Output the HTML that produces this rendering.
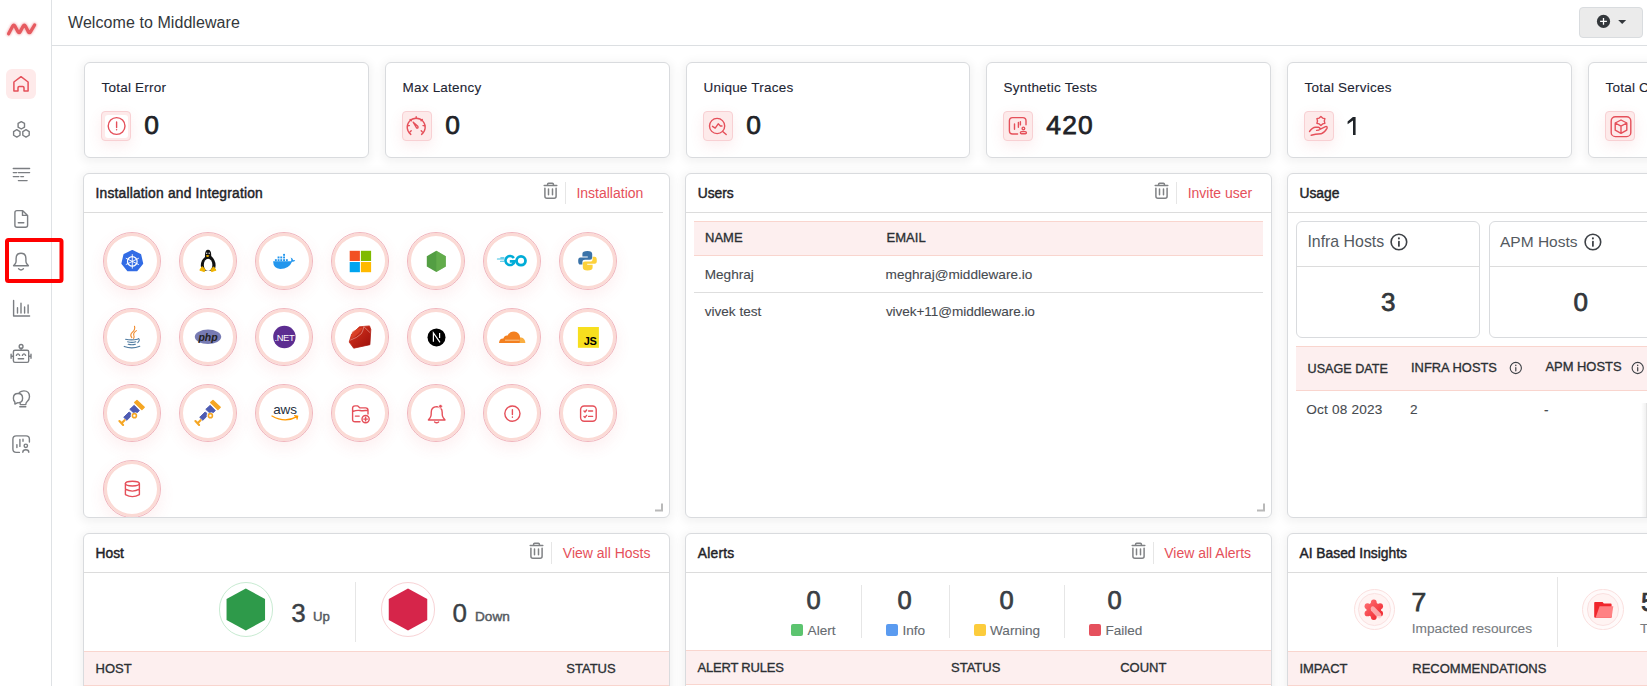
<!DOCTYPE html><html><head><meta charset="utf-8"><title>Middleware</title><style>
*{box-sizing:border-box;margin:0;padding:0}
html,body{width:1647px;height:686px;overflow:hidden;background:#fff;font-family:"Liberation Sans",sans-serif;color:#1f2328}
.t{position:absolute;white-space:nowrap;line-height:1}
.b{font-weight:700}
.card{position:absolute;top:62px;height:96px;width:285px;border:1px solid #d9dbde;border-radius:6px;background:#fff;box-shadow:0 2px 10px 3px rgba(0,0,0,.05)}
.ibox{position:absolute;width:30px;height:30px;border:1px solid #f8d0d3;border-radius:4px;background:#fdeaea;box-shadow:0 5px 14px rgba(229,80,90,.10)}
.panel{position:absolute;border:1px solid #d9dbde;border-radius:6px;background:#fff;box-shadow:0 2px 10px 3px rgba(0,0,0,.05);overflow:hidden}
.hb{position:absolute;height:1px;background:#dcdcdc}
.sep{position:absolute;width:1px;background:#e6e6e6}
.link{color:#e5505a;font-size:14px}
.ring{position:absolute;width:58px;height:58px;border-radius:50%;border:1px solid #f0b5bd;box-shadow:0 0 0 3px #fbdad5 inset,0 6px 16px rgba(229,80,90,.09);background:#fff}
.thead{position:absolute;background:#fdefef;border-top:1px solid #f9d5ce;border-bottom:1px solid #f9d5ce}
.th{font-size:13px;font-weight:700;color:#2b2f33}
.td{font-size:13.5px;color:#3d4146}
</style></head><body>
<div style="position:absolute;left:0;top:0;width:52px;height:686px;border-right:1px solid #dfe2e5;background:#fff"></div>
<div style="position:absolute;left:52px;top:0;width:1595px;height:46px;border-bottom:1px solid #dcdfe2;background:#fff"></div>
<div style="position:absolute;left:6px;top:69px;width:30px;height:30px;border-radius:6px;background:#feeaea"></div>
<div class="t" style="left:68.00px;top:15.26px;font-size:16px;color:#33373b;letter-spacing:0.07px;">Welcome to Middleware</div>
<div style="position:absolute;left:1579px;top:7px;width:64px;height:31px;border:1px solid #d9dcdf;border-radius:4px;background:#ebebeb"></div>
<div class="card" style="left:84px;width:285px"></div>
<div class="t" style="left:101.50px;top:80.87px;font-size:13.5px;color:#1d2533;-webkit-text-stroke:0.1px #1d2533;letter-spacing:0.22px;">Total Error</div>
<div class="ibox" style="left:101px;top:111px"></div>
<div class="t" style="left:144.30px;top:112.35px;font-size:26.4px;color:#1f2328;-webkit-text-stroke:0.75px #1f2328;letter-spacing:1.2px;">0</div>
<div class="card" style="left:385px;width:285px"></div>
<div class="t" style="left:402.50px;top:80.87px;font-size:13.5px;color:#1d2533;-webkit-text-stroke:0.1px #1d2533;letter-spacing:0.22px;">Max Latency</div>
<div class="ibox" style="left:402px;top:111px"></div>
<div class="t" style="left:445.30px;top:112.35px;font-size:26.4px;color:#1f2328;-webkit-text-stroke:0.75px #1f2328;letter-spacing:1.2px;">0</div>
<div class="card" style="left:686px;width:284px"></div>
<div class="t" style="left:703.50px;top:80.87px;font-size:13.5px;color:#1d2533;-webkit-text-stroke:0.1px #1d2533;letter-spacing:0.22px;">Unique Traces</div>
<div class="ibox" style="left:703px;top:111px"></div>
<div class="t" style="left:746.30px;top:112.35px;font-size:26.4px;color:#1f2328;-webkit-text-stroke:0.75px #1f2328;letter-spacing:1.2px;">0</div>
<div class="card" style="left:986px;width:285px"></div>
<div class="t" style="left:1003.50px;top:80.87px;font-size:13.5px;color:#1d2533;-webkit-text-stroke:0.1px #1d2533;letter-spacing:0.22px;">Synthetic Tests</div>
<div class="ibox" style="left:1003px;top:111px"></div>
<div class="t" style="left:1046.30px;top:112.35px;font-size:26.4px;color:#1f2328;-webkit-text-stroke:0.75px #1f2328;letter-spacing:1.2px;">420</div>
<div class="card" style="left:1287px;width:285px"></div>
<div class="t" style="left:1304.50px;top:80.87px;font-size:13.5px;color:#1d2533;-webkit-text-stroke:0.1px #1d2533;letter-spacing:0.22px;">Total Services</div>
<div class="ibox" style="left:1304px;top:111px"></div>
<div class="card" style="left:1588px;width:285px"></div>
<div class="t" style="left:1605.50px;top:80.87px;font-size:13.5px;color:#1d2533;-webkit-text-stroke:0.1px #1d2533;letter-spacing:0.22px;">Total Containers</div>
<div class="ibox" style="left:1605px;top:111px"></div>
<div style="position:absolute;left:105px;top:114.5px;width:22.5px;height:23px;border-radius:3px;background:#fff"></div>
<div class="panel" style="left:83px;top:173px;width:587px;height:345px"></div>
<div class="panel" style="left:685px;top:173px;width:587px;height:345px"></div>
<div class="panel" style="left:1287px;top:173px;width:400px;height:345px"></div>
<div class="panel" style="left:83px;top:533px;width:587px;height:200px"></div>
<div class="panel" style="left:685px;top:533px;width:587px;height:200px"></div>
<div class="panel" style="left:1287px;top:533px;width:400px;height:200px"></div>
<div class="hb" style="left:84px;top:212px;width:579px"></div>
<div class="hb" style="left:686px;top:212px;width:585px"></div>
<div class="hb" style="left:1288px;top:212px;width:359px"></div>
<div class="hb" style="left:84px;top:572px;width:585px"></div>
<div class="hb" style="left:686px;top:572px;width:585px"></div>
<div class="hb" style="left:1288px;top:572px;width:359px"></div>
<div class="t" style="left:95.50px;top:186.62px;font-size:13.8px;color:#1f2328;-webkit-text-stroke:0.45px #1f2328;letter-spacing:0.2px;">Installation and Integration</div>
<div class="t" style="left:697.70px;top:186.62px;font-size:13.8px;color:#1f2328;-webkit-text-stroke:0.45px #1f2328;">Users</div>
<div class="t" style="left:1299.50px;top:186.62px;font-size:13.8px;color:#1f2328;-webkit-text-stroke:0.45px #1f2328;">Usage</div>
<div class="t" style="left:95.50px;top:546.92px;font-size:13.8px;color:#1f2328;-webkit-text-stroke:0.45px #1f2328;">Host</div>
<div class="t" style="left:697.70px;top:546.92px;font-size:13.8px;color:#1f2328;-webkit-text-stroke:0.45px #1f2328;letter-spacing:0.25px;">Alerts</div>
<div class="t" style="left:1299.50px;top:546.92px;font-size:13.8px;color:#1f2328;-webkit-text-stroke:0.45px #1f2328;">AI Based Insights</div>
<div class="sep" style="left:565px;top:182px;height:22px"></div>
<div class="t" style="left:576.40px;top:186.25px;font-size:14px;color:#e5505a;">Installation</div>
<div class="sep" style="left:1176px;top:182px;height:22px"></div>
<div class="t" style="left:1187.70px;top:186.35px;font-size:14px;color:#e5505a;">Invite user</div>
<div class="sep" style="left:551px;top:542px;height:22px"></div>
<div class="t" style="left:562.80px;top:546.25px;font-size:14px;color:#e5505a;">View all Hosts</div>
<div class="sep" style="left:1153px;top:542px;height:22px"></div>
<div class="t" style="left:1164.20px;top:545.85px;font-size:14px;color:#e5505a;">View all Alerts</div>
<div style="position:absolute;left:84px;top:213px;width:584px;height:304px;overflow:hidden">
<div class="ring" style="left:19px;top:18.69999999999999px"></div>
<div class="ring" style="left:95px;top:18.69999999999999px"></div>
<div class="ring" style="left:171px;top:18.69999999999999px"></div>
<div class="ring" style="left:247px;top:18.69999999999999px"></div>
<div class="ring" style="left:323px;top:18.69999999999999px"></div>
<div class="ring" style="left:399px;top:18.69999999999999px"></div>
<div class="ring" style="left:475px;top:18.69999999999999px"></div>
<div class="ring" style="left:19px;top:94.60000000000002px"></div>
<div class="ring" style="left:95px;top:94.60000000000002px"></div>
<div class="ring" style="left:171px;top:94.60000000000002px"></div>
<div class="ring" style="left:247px;top:94.60000000000002px"></div>
<div class="ring" style="left:323px;top:94.60000000000002px"></div>
<div class="ring" style="left:399px;top:94.60000000000002px"></div>
<div class="ring" style="left:475px;top:94.60000000000002px"></div>
<div class="ring" style="left:19px;top:170.60000000000002px"></div>
<div class="ring" style="left:95px;top:170.60000000000002px"></div>
<div class="ring" style="left:171px;top:170.60000000000002px"></div>
<div class="ring" style="left:247px;top:170.60000000000002px"></div>
<div class="ring" style="left:323px;top:170.60000000000002px"></div>
<div class="ring" style="left:399px;top:170.60000000000002px"></div>
<div class="ring" style="left:475px;top:170.60000000000002px"></div>
<div class="ring" style="left:19px;top:246.5px"></div>
</div>
<div style="position:absolute;left:84px;top:517px;width:585px;height:16px;background:transparent"></div>
<div class="thead" style="left:694px;top:221px;width:569px;height:35px"></div>
<div class="t" style="left:705.00px;top:231.30px;font-size:13px;color:#2b2f33;-webkit-text-stroke:0.32px #2b2f33;">NAME</div>
<div class="t" style="left:886.60px;top:231.30px;font-size:13px;color:#2b2f33;-webkit-text-stroke:0.32px #2b2f33;">EMAIL</div>
<div class="t" style="left:704.70px;top:268.29px;font-size:13.6px;color:#464a4f;-webkit-text-stroke:0.1px #464a4f;">Meghraj</div>
<div class="t" style="left:885.60px;top:268.29px;font-size:13.6px;color:#464a4f;-webkit-text-stroke:0.1px #464a4f;">meghraj@middleware.io</div>
<div class="hb" style="left:694px;top:292px;width:569px;background:#dedede"></div>
<div class="t" style="left:704.70px;top:304.79px;font-size:13.6px;color:#464a4f;-webkit-text-stroke:0.1px #464a4f;">vivek test</div>
<div class="t" style="left:885.90px;top:304.79px;font-size:13.6px;color:#464a4f;-webkit-text-stroke:0.1px #464a4f;letter-spacing:-0.08px;">vivek+11@middleware.io</div>
<div style="position:absolute;left:1296px;top:221px;width:184px;height:117px;border:1px solid #d9dbde;border-radius:6px;background:#fff"></div>
<div class="hb" style="left:1297px;top:266px;width:182px"></div>
<div style="position:absolute;left:1489px;top:221px;width:184px;height:117px;border:1px solid #d9dbde;border-radius:6px;background:#fff"></div>
<div class="hb" style="left:1490px;top:266px;width:182px"></div>
<div class="t" style="left:1307.40px;top:234.14px;font-size:15.9px;color:#555a5f;">Infra Hosts</div>
<div class="t" style="left:1500.00px;top:234.48px;font-size:15.5px;color:#555a5f;">APM Hosts</div>
<div class="t" style="left:1381.00px;top:289.29px;font-size:26px;color:#33373b;-webkit-text-stroke:0.75px #33373b;">3</div>
<div class="t" style="left:1573.50px;top:289.29px;font-size:26px;color:#33373b;-webkit-text-stroke:0.75px #33373b;">0</div>
<div class="thead" style="left:1296px;top:346px;width:400px;height:45px"></div>
<div class="t" style="left:1307.60px;top:363.13px;font-size:12.6px;color:#2b2f33;-webkit-text-stroke:0.32px #2b2f33;">USAGE DATE</div>
<div class="t" style="left:1411.00px;top:361.88px;font-size:12.9px;color:#2b2f33;-webkit-text-stroke:0.32px #2b2f33;">INFRA HOSTS</div>
<div class="t" style="left:1545.40px;top:361.24px;font-size:12.95px;color:#2b2f33;-webkit-text-stroke:0.32px #2b2f33;">APM HOSTS</div>
<div class="t" style="left:1306.30px;top:402.79px;font-size:13.6px;color:#464a4f;-webkit-text-stroke:0.1px #464a4f;letter-spacing:0.2px;">Oct 08 2023</div>
<div class="t" style="left:1410.00px;top:402.79px;font-size:13.6px;color:#464a4f;-webkit-text-stroke:0.1px #464a4f;">2</div>
<div class="t" style="left:1544.00px;top:402.79px;font-size:13.6px;color:#464a4f;-webkit-text-stroke:0.1px #464a4f;">-</div>
<div style="position:absolute;left:1641px;top:403px;width:5px;height:114px;background:linear-gradient(to right,rgba(0,0,0,0),rgba(0,0,0,.06))"></div>
<div style="position:absolute;left:1646px;top:403px;width:1px;height:114px;background:#e2e2e2"></div>
<div style="position:absolute;left:218.5px;top:582px;width:54.5px;height:54.5px;border-radius:50%;border:1px solid #c8ebd2"></div>
<div style="position:absolute;left:380.7px;top:582px;width:54.5px;height:54.5px;border-radius:50%;border:1px solid #f8d3d6"></div>
<div class="t" style="left:291.30px;top:599.79px;font-size:26px;color:#3a3f45;-webkit-text-stroke:0.4px #3a3f45;letter-spacing:0.3px;">3</div>
<div class="t" style="left:313.00px;top:610.13px;font-size:13.2px;color:#555a5f;-webkit-text-stroke:0.45px #555a5f;">Up</div>
<div class="t" style="left:452.60px;top:599.79px;font-size:26px;color:#3a3f45;-webkit-text-stroke:0.4px #3a3f45;letter-spacing:0.3px;">0</div>
<div class="t" style="left:475.00px;top:609.79px;font-size:13.6px;color:#555a5f;-webkit-text-stroke:0.45px #555a5f;">Down</div>
<div class="sep" style="left:355px;top:582px;height:60px"></div>
<div class="thead" style="left:84px;top:651px;width:585px;height:35px"></div>
<div class="t" style="left:95.50px;top:661.70px;font-size:13px;color:#2b2f33;-webkit-text-stroke:0.32px #2b2f33;">HOST</div>
<div class="t" style="left:566.30px;top:661.70px;font-size:13px;color:#2b2f33;-webkit-text-stroke:0.32px #2b2f33;">STATUS</div>
<div class="t" style="left:806.40px;top:587.71px;font-size:25.5px;color:#3a3f45;-webkit-text-stroke:0.75px #3a3f45;">0</div>
<div style="position:absolute;left:791px;top:624.3px;width:12px;height:11.5px;border-radius:2px;background:#5cc46f"></div>
<div class="t" style="left:807.60px;top:623.99px;font-size:13.6px;color:#666b70;-webkit-text-stroke:0.1px #666b70;">Alert</div>
<div class="t" style="left:897.50px;top:587.71px;font-size:25.5px;color:#3a3f45;-webkit-text-stroke:0.75px #3a3f45;">0</div>
<div style="position:absolute;left:886px;top:624.3px;width:12px;height:11.5px;border-radius:2px;background:#5a9bf0"></div>
<div class="t" style="left:902.40px;top:623.99px;font-size:13.6px;color:#666b70;-webkit-text-stroke:0.1px #666b70;">Info</div>
<div class="t" style="left:999.50px;top:587.71px;font-size:25.5px;color:#3a3f45;-webkit-text-stroke:0.75px #3a3f45;">0</div>
<div style="position:absolute;left:974px;top:624.3px;width:12px;height:11.5px;border-radius:2px;background:#fccc3c"></div>
<div class="t" style="left:990.00px;top:623.99px;font-size:13.6px;color:#666b70;-webkit-text-stroke:0.1px #666b70;">Warning</div>
<div class="t" style="left:1107.60px;top:587.71px;font-size:25.5px;color:#3a3f45;-webkit-text-stroke:0.75px #3a3f45;">0</div>
<div style="position:absolute;left:1089px;top:624.3px;width:12px;height:11.5px;border-radius:2px;background:#e5505d"></div>
<div class="t" style="left:1105.40px;top:623.99px;font-size:13.6px;color:#666b70;-webkit-text-stroke:0.1px #666b70;">Failed</div>
<div class="sep" style="left:861px;top:585px;height:53px"></div>
<div class="sep" style="left:949px;top:585px;height:53px"></div>
<div class="sep" style="left:1064px;top:585px;height:53px"></div>
<div class="thead" style="left:686px;top:650px;width:585px;height:35px"></div>
<div class="t" style="left:697.50px;top:661.20px;font-size:13px;color:#2b2f33;-webkit-text-stroke:0.32px #2b2f33;letter-spacing:-0.2px;">ALERT RULES</div>
<div class="t" style="left:951.00px;top:661.20px;font-size:13px;color:#2b2f33;-webkit-text-stroke:0.32px #2b2f33;">STATUS</div>
<div class="t" style="left:1120.20px;top:661.20px;font-size:13px;color:#2b2f33;-webkit-text-stroke:0.32px #2b2f33;">COUNT</div>
<div style="position:absolute;left:1353.6000000000001px;top:589.2px;width:41.2px;height:41.2px;border-radius:50%;border:1px solid #fbe0df;background:#fffafa"></div>
<div style="position:absolute;left:1357.8px;top:593.4px;width:32.8px;height:32.8px;border-radius:50%;border:1px solid #fae1e1;background:#fff3f2"></div>
<div style="position:absolute;left:1582.4px;top:589.2px;width:41.2px;height:41.2px;border-radius:50%;border:1px solid #fbe0df;background:#fffafa"></div>
<div style="position:absolute;left:1586.6px;top:593.4px;width:32.8px;height:32.8px;border-radius:50%;border:1px solid #fae1e1;background:#fff3f2"></div>
<div class="t" style="left:1411.50px;top:589.47px;font-size:26.5px;color:#33373b;-webkit-text-stroke:0.75px #33373b;letter-spacing:0.5px;">7</div>
<div class="t" style="left:1411.80px;top:621.90px;font-size:13.7px;color:#777b80;-webkit-text-stroke:0.1px #777b80;">Impacted resources</div>
<div class="t" style="left:1641.00px;top:589.47px;font-size:26.5px;color:#33373b;-webkit-text-stroke:0.75px #33373b;">5</div>
<div class="t" style="left:1640.00px;top:621.90px;font-size:13.7px;color:#777b80;-webkit-text-stroke:0.1px #777b80;">T</div>
<div class="sep" style="left:1557px;top:577px;height:70px"></div>
<div class="thead" style="left:1288px;top:651px;width:400px;height:35px"></div>
<div class="t" style="left:1299.40px;top:661.70px;font-size:13px;color:#2b2f33;-webkit-text-stroke:0.32px #2b2f33;">IMPACT</div>
<div class="t" style="left:1412.30px;top:661.70px;font-size:13px;color:#2b2f33;-webkit-text-stroke:0.32px #2b2f33;">RECOMMENDATIONS</div>
<svg style="position:absolute;left:0;top:0;pointer-events:none" width="1647" height="686" viewBox="0 0 1647 686"><rect x="7" y="240" width="54.5" height="41" rx="1.5" fill="none" stroke="#ff0000" stroke-width="4"/><defs><filter id="blur1" x="-20%" y="-50%" width="140%" height="200%"><feGaussianBlur stdDeviation="0.9"/></filter></defs><path d="M8.6,33.8 L12.6,26.2 Q13.8,24 15,26.2 L17.8,31.6 Q19,33.8 20.2,31.6 L23.1,26.2 Q24.3,24 25.5,26.2 L28.2,31.6 Q29.4,33.8 30.6,31.6 L34.6,25" fill="none" stroke="#f4a9ad" stroke-width="4.6" stroke-linecap="round" stroke-linejoin="round" filter="url(#blur1)" opacity=".8"/><path d="M8.6,33.8 L12.6,26.2 Q13.8,24 15,26.2 L17.8,31.6 Q19,33.8 20.2,31.6 L23.1,26.2 Q24.3,24 25.5,26.2 L28.2,31.6 Q29.4,33.8 30.6,31.6 L34.6,25" fill="none" stroke="#e65b60" stroke-width="3.3" stroke-linecap="round" stroke-linejoin="round"/><path d="M13.9,91 V82 L21,76.7 L28.1,82 V91 H24 V87.8 Q24,86.6 22.8,86.6 H19.2 Q18,86.6 18,87.8 V91 Z" fill="none" stroke="#e5505a" stroke-width="1.5" stroke-linejoin="round"/><path d="M21.30,121.60 L24.50,123.45 L24.50,127.15 L21.30,129.00 L18.10,127.15 L18.10,123.45 Z" fill="none" stroke="#7b7e82" stroke-width="1.4" stroke-linecap="round" stroke-linejoin="round"/><path d="M16.80,129.70 L20.00,131.55 L20.00,135.25 L16.80,137.10 L13.60,135.25 L13.60,131.55 Z" fill="none" stroke="#7b7e82" stroke-width="1.4" stroke-linecap="round" stroke-linejoin="round"/><path d="M26.00,129.70 L29.20,131.55 L29.20,135.25 L26.00,137.10 L22.80,135.25 L22.80,131.55 Z" fill="none" stroke="#7b7e82" stroke-width="1.4" stroke-linecap="round" stroke-linejoin="round"/><path d="M13.3,168.5 H29.6 M13.3,172.6 H16.7 M18.4,172.6 H29.6 M13.3,176.6 H18.8 M20.8,176.6 H23.5 M18.4,180.6 H27.1" fill="none" stroke="#7b7e82" stroke-width="1.4" stroke-linecap="round" stroke-linejoin="round"/><path d="M22.5,210.6 H17 Q14.9,210.6 14.9,212.7 V225.3 Q14.9,227.3 17,227.3 H25.5 Q27.6,227.3 27.6,225.3 V215.4 Z M22.5,210.6 V215.4 H27.6 M18.3,222.7 H23.8" fill="none" stroke="#7b7e82" stroke-width="1.4" stroke-linecap="round" stroke-linejoin="round"/><path d="M13.6,265.8 H28.4 L26.6,263.5 Q25.9,262.5 25.9,261 V258.5 Q25.9,253.3 21,253.3 Q16.1,253.3 16.1,258.5 V261 Q16.1,262.5 15.4,263.5 Z M18.6,268.8 Q21,271 23.4,268.8" fill="none" stroke="#7b7e82" stroke-width="1.4" stroke-linecap="round" stroke-linejoin="round"/><path d="M13.6,300.5 V316 H29.6 M17.5,307.8 V313 M21,303.3 V313 M24.6,307 V313 M28.1,305 V313" fill="none" stroke="#7b7e82" stroke-width="1.4" stroke-linecap="round" stroke-linejoin="round"/><rect x="13.4" y="350.2" width="15.3" height="12.2" rx="1.6" fill="none" stroke="#7b7e82" stroke-width="1.4" stroke-linecap="round" stroke-linejoin="round"/><circle cx="21.1" cy="346.4" r="1.9" fill="none" stroke="#7b7e82" stroke-width="1.4" stroke-linecap="round" stroke-linejoin="round"/><path d="M21.1,348.3 V350.2 M13.4,356.3 H11.3 M11.1,354.3 V358.3 M28.7,356.3 H30.8 M31,354.3 V358.3 M16.4,355.3 Q18,352.4 19.6,355.3 M22.4,355.3 Q24,352.4 25.6,355.3 M18.2,358.8 H23.6" fill="none" stroke="#7b7e82" stroke-width="1.4" stroke-linecap="round" stroke-linejoin="round"/><path d="M19.3,392.6 Q21.2,390.9 23.9,390.9 Q29.5,390.9 29.5,396.8 Q29.5,399.6 27,401.8 Q25.8,402.9 25.8,404.6 H20.3 Q20.3,403.5 20,402.8" fill="none" stroke="#7b7e82" stroke-width="1.4" stroke-linecap="round" stroke-linejoin="round"/><path d="M22.6,398.2 Q22.6,393.5 18,393.5 Q13.4,393.5 13.4,398.2 Q13.4,400.6 14.8,401.8 L14.9,404 L17.4,402.8 Q22.6,403.2 22.6,398.2 Z M19.8,406.8 H25.8" fill="none" stroke="#7b7e82" stroke-width="1.4" stroke-linecap="round" stroke-linejoin="round"/><path d="M29.4,442 V439.2 Q29.4,435.9 26.1,435.9 H16.2 Q12.9,435.9 12.9,439.2 V449.1 Q12.9,452.4 16.2,452.4 H19.4 M16.9,444.6 V447.6 M19.9,439.4 V446.4 M23,439.3 V441.3 M22.8,452.3 Q22.8,449.7 25.8,449.7 Q28.8,449.7 28.8,452.3" fill="none" stroke="#7b7e82" stroke-width="1.4" stroke-linecap="round" stroke-linejoin="round"/><circle cx="25.8" cy="445.8" r="1.7" fill="none" stroke="#7b7e82" stroke-width="1.4" stroke-linecap="round" stroke-linejoin="round"/><circle cx="1603.5" cy="21.4" r="6.6" fill="#33373b"/><path d="M1603.5,18 V24.8 M1600.1,21.4 H1606.9" stroke="#fff" stroke-width="1.3"/><path d="M1618.2,20.1 H1626.2 L1622.2,24 Z" fill="#33373b"/><path d="M1347.6,121.4 L1352.9,117.1 H1355.6 V135.1 H1353.0 V120.6 L1347.6,124.2 Z" fill="#1f2328"/><path d="M544.2,185.4 H556.8 M547.6,185.4 V184.2 Q547.6,183.2 548.6,183.2 H552.4 Q553.4,183.2 553.4,184.2 V185.4 M544.9,188.3 V196.2 Q544.9,198.2 546.9,198.2 H554.1 Q556.1,198.2 556.1,196.2 V188.3 M548.5,189.1 V194.7 M552.5,189.1 V194.7" fill="none" stroke="#808285" stroke-width="1.5" stroke-linecap="round" stroke-linejoin="round"/><path d="M1155.2,185.4 H1167.8 M1158.6,185.4 V184.2 Q1158.6,183.2 1159.6,183.2 H1163.4 Q1164.4,183.2 1164.4,184.2 V185.4 M1155.9,188.3 V196.2 Q1155.9,198.2 1157.9,198.2 H1165.1 Q1167.1,198.2 1167.1,196.2 V188.3 M1159.5,189.1 V194.7 M1163.5,189.1 V194.7" fill="none" stroke="#808285" stroke-width="1.5" stroke-linecap="round" stroke-linejoin="round"/><path d="M530.2,545.4 H542.8 M533.6,545.4 V544.2 Q533.6,543.2 534.6,543.2 H538.4 Q539.4,543.2 539.4,544.2 V545.4 M530.9,548.3 V556.2 Q530.9,558.2 532.9,558.2 H540.1 Q542.1,558.2 542.1,556.2 V548.3 M534.5,549.1 V554.7 M538.5,549.1 V554.7" fill="none" stroke="#808285" stroke-width="1.5" stroke-linecap="round" stroke-linejoin="round"/><path d="M1132.2,545.4 H1144.8 M1135.6,545.4 V544.2 Q1135.6,543.2 1136.6,543.2 H1140.4 Q1141.4,543.2 1141.4,544.2 V545.4 M1132.9,548.3 V556.2 Q1132.9,558.2 1134.9,558.2 H1142.1 Q1144.1,558.2 1144.1,556.2 V548.3 M1136.5,549.1 V554.7 M1140.5,549.1 V554.7" fill="none" stroke="#808285" stroke-width="1.5" stroke-linecap="round" stroke-linejoin="round"/><circle cx="116.6" cy="126" r="8.4" fill="none" stroke="#e5505a" stroke-width="1.4" stroke-linecap="round" stroke-linejoin="round" stroke-width="1.3"/><path d="M116.6,121.9 V127.6 M116.6,129.6 V129.8" fill="none" stroke="#e5505a" stroke-width="1.4" stroke-linecap="round" stroke-linejoin="round"/><path d="M410.8,134.4 A9,9 0 1 1 421.6,134.4" fill="none" stroke="#e5505a" stroke-width="1.4" stroke-linecap="round" stroke-linejoin="round"/><path d="M416.2,116.8 V118.6 M407.6,125.6 H409.4 M423,125.6 H424.8 M410.1,119.5 L411.3,120.7 M422.3,119.5 L421.1,120.7 M410.2,131.8 L411.2,130.8 M422.2,131.8 L421.2,130.8" fill="none" stroke="#e5505a" stroke-width="1.4" stroke-linecap="round" stroke-linejoin="round"/><path d="M413.2,122.2 L417.8,126.2 Q418.6,128.4 416.6,128 Z" fill="none" stroke="#e5505a" stroke-width="1.4" stroke-linecap="round" stroke-linejoin="round" stroke-width="1.3"/><circle cx="717.1" cy="126" r="7.6" fill="none" stroke="#e5505a" stroke-width="1.4" stroke-linecap="round" stroke-linejoin="round"/><path d="M722.7,131.4 L726.2,134.6 M712.5,126.3 L715.2,128.1 L718.2,123.8 L720.4,126.0 H722" fill="none" stroke="#e5505a" stroke-width="1.4" stroke-linecap="round" stroke-linejoin="round"/><path d="M1026,124.7 V120.8 Q1026,117.6 1022.8,117.6 H1012.6 Q1009.4,117.6 1009.4,120.8 V130.8 Q1009.4,134 1012.6,134 H1017.6 M1014.5,124 V129.3 M1018.4,122.5 V127.3 M1020.4,121.8 V124.9" fill="none" stroke="#e5505a" stroke-width="1.4" stroke-linecap="round" stroke-linejoin="round"/><circle cx="1023.4" cy="128.4" r="1.3" fill="none" stroke="#e5505a" stroke-width="1.4" stroke-linecap="round" stroke-linejoin="round" stroke-width="1.2"/><rect x="1020.4" y="131.6" width="6" height="2.2" rx="1.1" fill="none" stroke="#e5505a" stroke-width="1.4" stroke-linecap="round" stroke-linejoin="round" stroke-width="1.2"/><path d="M1320.90,116.40 L1322.60,118.06 L1324.88,118.70 L1324.30,121.00 L1324.88,123.30 L1322.60,123.94 L1320.90,125.60 L1319.20,123.94 L1316.92,123.30 L1317.50,121.00 L1316.92,118.70 L1319.20,118.06 Z" fill="none" stroke="#e5505a" stroke-width="1.4" stroke-linecap="round" stroke-linejoin="round" stroke-width="1.2"/><path d="M1309.5,131.5 Q1312.5,127.2 1315.5,127.2 H1318.5 Q1320.3,127.6 1319.8,129.3 Q1319.3,130.4 1316.6,130.4 M1319.8,129.3 L1325.5,126.6 Q1327.6,126.2 1327,128.3 Q1324.4,132.8 1321,133.8 Q1315,134.2 1311.2,135.2" fill="none" stroke="#e5505a" stroke-width="1.4" stroke-linecap="round" stroke-linejoin="round" stroke-width="1.3"/><rect x="1611.2" y="116.8" width="19.6" height="19.8" rx="4.2" fill="none" stroke="#e5505a" stroke-width="1.4" stroke-linecap="round" stroke-linejoin="round"/><path d="M1621,120 L1626.8,123 V130.2 L1621,133.4 L1615.2,130.2 V123 Z M1615.2,123 L1621,126.2 L1626.8,123 M1621,126.2 V133.4" fill="none" stroke="#e5505a" stroke-width="1.4" stroke-linecap="round" stroke-linejoin="round" stroke-width="1.3"/><circle cx="1398.9" cy="242" r="7.8" fill="none" stroke="#3d4146" stroke-width="1.6"/><path d="M1398.9,238.1 V238.49" stroke="#3d4146" stroke-width="1.92" stroke-linecap="round"/><path d="M1398.9,241.61 V245.9" stroke="#3d4146" stroke-width="1.7600000000000002" stroke-linecap="round"/><circle cx="1592.9" cy="242" r="7.8" fill="none" stroke="#3d4146" stroke-width="1.6"/><path d="M1592.9,238.1 V238.49" stroke="#3d4146" stroke-width="1.92" stroke-linecap="round"/><path d="M1592.9,241.61 V245.9" stroke="#3d4146" stroke-width="1.7600000000000002" stroke-linecap="round"/><circle cx="1515.8" cy="368" r="5.6" fill="none" stroke="#3d4146" stroke-width="1.1"/><path d="M1515.8,365.2 V365.48" stroke="#3d4146" stroke-width="1.32" stroke-linecap="round"/><path d="M1515.8,367.72 V370.8" stroke="#3d4146" stroke-width="1.2100000000000002" stroke-linecap="round"/><circle cx="1637.7" cy="368" r="5.6" fill="none" stroke="#3d4146" stroke-width="1.1"/><path d="M1637.7,365.2 V365.48" stroke="#3d4146" stroke-width="1.32" stroke-linecap="round"/><path d="M1637.7,367.72 V370.8" stroke="#3d4146" stroke-width="1.2100000000000002" stroke-linecap="round"/><path d="M245.80,588.50 L265.05,599.00 L265.05,620.00 L245.80,630.50 L226.55,620.00 L226.55,599.00 Z" fill="#2e9a4a"/><path d="M408.00,588.50 L427.25,599.00 L427.25,620.00 L408.00,630.50 L388.75,620.00 L388.75,599.00 Z" fill="#d6254a"/><path d="M662,503.5 V510.5 H655" fill="none" stroke="#b9b9b9" stroke-width="2"/><path d="M1264,503.5 V510.5 H1257" fill="none" stroke="#b9b9b9" stroke-width="2"/><path d="M132.30,250.80 L140.43,254.72 L142.44,263.51 L136.81,270.57 L127.79,270.57 L122.16,263.51 L124.17,254.72 Z" fill="#326ce5" stroke="#326ce5" stroke-width="1.5" stroke-linejoin="round"/><circle cx="132.3" cy="261.4" r="4.8" fill="none" stroke="#fff" stroke-width="1.2"/><path d="M132.3,254.2 V268.6 M125.8,258.2 L138.8,264.6 M125.8,264.6 L138.8,258.2" stroke="#fff" stroke-width="0.9"/><path d="M205,257 Q204.6,249.8 208,249.8 Q211.4,249.8 211.2,256 Q215.6,260 215.6,265.4 Q215.6,270.2 211,270.8 H205 Q200.8,270.2 200.8,265.4 Q201,260 205,257 Z" fill="#111"/><ellipse cx="208.1" cy="264.9" rx="4.3" ry="6.1" fill="#fff"/><circle cx="206.7" cy="253.3" r="0.75" fill="#ddd"/><circle cx="209.2" cy="253.3" r="0.75" fill="#ddd"/><path d="M205.8,255.7 Q207.6,254.3 209.4,255.7 Q207.6,258.2 205.8,255.7 Z" fill="#f0b400"/><path d="M199.8,270.2 L202.2,266.6 L205.2,269.6 L204.4,271.6 Z M216,270.2 L213.6,266.8 L210.8,269.8 L211.6,271.6 Z" fill="#f0b400" stroke="#f0b400" stroke-width="1" stroke-linejoin="round"/><path d="M273.1,261.3 H291.2 Q291.6,258.6 290.6,257.4 Q292.8,258 293.2,260.2 Q294.4,259.6 295.2,260.4 Q294.2,262 292,261.8 Q289.2,268.9 280.2,268.9 Q273.4,268.8 273.1,261.3 Z" fill="#2396ed"/><rect x="274.9" y="259.2" width="1.9" height="1.9" fill="#2396ed"/><rect x="277.6" y="259.2" width="1.9" height="1.9" fill="#2396ed"/><rect x="280.3" y="259.2" width="1.9" height="1.9" fill="#2396ed"/><rect x="283.1" y="259.2" width="1.9" height="1.9" fill="#2396ed"/><rect x="285.9" y="259.2" width="1.9" height="1.9" fill="#2396ed"/><rect x="277.6" y="256.5" width="1.9" height="1.9" fill="#2396ed"/><rect x="280.3" y="256.5" width="1.9" height="1.9" fill="#2396ed"/><rect x="283.1" y="256.5" width="1.9" height="1.9" fill="#2396ed"/><rect x="283.1" y="253.9" width="1.9" height="1.9" fill="#2396ed"/><rect x="349.7" y="250.8" width="10.2" height="10.2" fill="#f25022"/><rect x="360.9" y="250.8" width="10.2" height="10.2" fill="#7fba00"/><rect x="349.7" y="262" width="10.2" height="10.2" fill="#00a4ef"/><rect x="360.9" y="262" width="10.2" height="10.2" fill="#ffb900"/><path d="M436.3,250.8 L445.8,256.2 V266.6 L436.3,272 L426.8,266.6 V256.2 Z" fill="#539e43"/><path d="M436.3,250.8 L445.8,256.2 V266.6 L436.3,272 Z" fill="#6cb552" opacity=".6"/><ellipse cx="521" cy="260.8" rx="4.5" ry="4.4" stroke="#00acd7" stroke-width="2.8" fill="none"/><path d="M513.9,258 A4.6,4.5 0 1 0 514.6,261.4 H509.8" stroke="#00acd7" stroke-width="2.6" fill="none"/><path d="M497.4,259 H503.6 M500.8,257.8 H504 M500.5,261.2 H504" stroke="#3cc0e2" stroke-width="1.1" stroke-linecap="round"/><path d="M587.5,251 Q582.2,251 582.4,254 V256.6 H587.8 V257.6 H580.4 Q578,257.6 578.2,261.2 Q578.2,264.6 580.4,264.6 H582.4 V262.2 Q582.4,259.8 585,259.8 H590 Q592.2,259.8 592.2,257.6 V254 Q592.2,251 587.5,251 Z" fill="#3a73a9"/><path d="M587.4,270.4 Q592.8,270.4 592.6,267.4 V264.8 H587.2 V263.8 H594.6 Q597,263.8 596.8,260.2 Q596.8,256.8 594.6,256.8 H592.6 V259.2 Q592.6,261.6 590,261.6 H585 Q582.8,261.6 582.8,263.8 V267.4 Q582.8,270.4 587.4,270.4 Z" fill="#fdd13a"/><path d="M134.5,326.2 Q135.6,329.4 132.2,332.4 Q129.6,335 131.8,337.6 M136.4,330.6 Q133,332.6 133.8,335.2 Q134.6,337 133.6,338.4" fill="none" stroke="#f08a2c" stroke-width="1.1" stroke-linecap="round"/><path d="M125.6,339.3 Q131.5,340.5 137.6,339.2 M138.2,338.6 Q140.6,339.6 137.8,342.6 M127.6,341.8 Q132,342.9 135.8,341.8 M128.2,344.3 Q132,345.3 135.4,344.3 M124.2,346.4 Q132,349.4 139.8,346.2" fill="none" stroke="#4f7ba0" stroke-width="1.05" stroke-linecap="round"/><ellipse cx="208" cy="336.8" rx="13.2" ry="7.2" fill="#777bb3"/><text x="208" y="340.6" text-anchor="middle" font-family="Liberation Sans" font-style="italic" font-weight="700" font-size="10.5" fill="#222">php</text><circle cx="284.4" cy="337" r="11.2" fill="#5c2d91"/><text x="284.4" y="340.6" text-anchor="middle" font-family="Liberation Sans" font-size="9.4" fill="#fff" letter-spacing="-0.4">.NET</text><defs><linearGradient id="rb" gradientUnits="userSpaceOnUse" x1="350" y1="326" x2="371" y2="348"><stop offset="0" stop-color="#d8361f"/><stop offset="1" stop-color="#9c0f0a"/></linearGradient></defs><path d="M349.2,342.1 L351.6,334.2 L359.4,326.8 L369.5,325.9 L370.8,329.4 L369.9,344.7 L353.7,348.2 Z" fill="url(#rb)" stroke="url(#rb)" stroke-width="0.8" stroke-linejoin="round"/><path d="M350.2,340.2 Q357,338 361.4,333.6 Q363.4,330 363.8,326.6 L369.9,332.5" fill="none" stroke="#f6c9c0" stroke-width="0.6" opacity=".85"/><path d="M352,332 Q356,328.4 362.6,327.4 Q361,332.6 350.8,339.6 Z" fill="#e04a2e" opacity=".7"/><circle cx="436.5" cy="337.4" r="9" fill="#000"/><path d="M433.4,341.8 V333 L440,342.4 M439.6,333 V338" fill="none" stroke="#fff" stroke-width="1.2"/><path d="M516.5,342.9 Q517.4,337 521.2,337.6 Q525,338.2 525.4,342.9 Z" fill="#faae40"/><path d="M499,342.9 Q499.4,338.4 503.4,338.6 Q504.4,335.2 507.6,335.6 Q509.6,331.4 514,331.4 Q519.4,331.6 520.2,337.6 L519.6,342.9 Z" fill="#f38020"/><path d="M505,340.2 H519.6" stroke="#fdd6a8" stroke-width="0.8"/><rect x="577.9" y="327" width="21" height="20.8" fill="#f7df1e"/><text x="596.6" y="345.4" text-anchor="end" font-family="Liberation Sans" font-weight="700" font-size="11" fill="#000" letter-spacing="-0.3">JS</text><g transform="translate(116,397)"><path d="M18.66,5.6 L20.99,3.5 L28.22,10.26 L25.89,12.59 Z" fill="#f5a623" stroke="#f5a623" stroke-width="1.3" stroke-linejoin="round"/><path d="M13.76,12.36 L18.19,8.3 L23.32,13.53 L21.55,15.49 Q19.6,14.4 17.2,15.4 Z" fill="#4e5bb2" stroke="#4e5bb2" stroke-width="0.9" stroke-linejoin="round"/><path d="M7.7,20.3 L13.06,15.02 L14.83,16.23 Q13.8,17.9 14.23,19.96 L10.82,23.32 Z" fill="#4e5bb2" stroke="#4e5bb2" stroke-width="0.9" stroke-linejoin="round"/><circle cx="18.42" cy="18.66" r="2.0" fill="#fff" stroke="#f5a623" stroke-width="1.6"/><path d="M8.6,23.2 L6.06,25.7 M3.4,24.1 L7.1,27.9" stroke="#f5a623" stroke-width="2.1" stroke-linecap="round"/></g><g transform="translate(192,397)"><path d="M18.66,5.6 L20.99,3.5 L28.22,10.26 L25.89,12.59 Z" fill="#f5a623" stroke="#f5a623" stroke-width="1.3" stroke-linejoin="round"/><path d="M13.76,12.36 L18.19,8.3 L23.32,13.53 L21.55,15.49 Q19.6,14.4 17.2,15.4 Z" fill="#4e5bb2" stroke="#4e5bb2" stroke-width="0.9" stroke-linejoin="round"/><path d="M7.7,20.3 L13.06,15.02 L14.83,16.23 Q13.8,17.9 14.23,19.96 L10.82,23.32 Z" fill="#4e5bb2" stroke="#4e5bb2" stroke-width="0.9" stroke-linejoin="round"/><circle cx="18.42" cy="18.66" r="2.0" fill="#fff" stroke="#f5a623" stroke-width="1.6"/><path d="M8.6,23.2 L6.06,25.7 M3.4,24.1 L7.1,27.9" stroke="#f5a623" stroke-width="2.1" stroke-linecap="round"/></g><text x="285" y="413.8" text-anchor="middle" font-family="Liberation Sans" font-size="13.5" fill="#252f3e" letter-spacing="-0.2">aws</text><path d="M272,416 Q285,423.4 297,416.6 M294.6,415.6 L297.6,416.2 L297,419" fill="none" stroke="#f90" stroke-width="1.3" stroke-linecap="round"/><path d="M8,16.3 H3 Q0.6,16.3 0.6,13.9 V2.6 Q0.6,0.4 3,0.4 H5.8 L8,2.4 H13.6 Q16,2.4 16,4.8 V8.6 M0.6,6 Q5,4.4 8,5 Q11,5.6 16,4.8 M3.4,10.6 H7.2" transform="translate(352,405.5)" fill="none" stroke="#e5505a" stroke-width="1.4" stroke-linecap="round" stroke-linejoin="round" stroke-width="1.2"/><circle cx="365.6" cy="419.1" r="3.6" fill="none" stroke="#e5505a" stroke-width="1.4" stroke-linecap="round" stroke-linejoin="round" stroke-width="1.2"/><path d="M365.6,417.3 V420.9 M363.8,419.1 H367.4" fill="none" stroke="#e5505a" stroke-width="1.4" stroke-linecap="round" stroke-linejoin="round" stroke-width="1.1"/><path d="M428.4,420 H445 L443.2,417.6 Q442.2,416.4 442.2,414 V412.4 Q442.2,407 436.6,406.6 Q431.2,407 431.2,412.4 V414 Q431.2,416.4 430.2,417.6 Z M434.6,422 Q436.6,423.6 438.6,422" fill="none" stroke="#e5505a" stroke-width="1.4" stroke-linecap="round" stroke-linejoin="round" stroke-width="1.2"/><circle cx="440.5" cy="406.3" r="1.9" fill="#e5505a" stroke="#fff" stroke-width="0.8"/><circle cx="512.4" cy="413.6" r="7.6" fill="none" stroke="#e5505a" stroke-width="1.4" stroke-linecap="round" stroke-linejoin="round" stroke-width="1.2"/><path d="M512.4,409.8 V414.6 M512.4,417 V417.2" fill="none" stroke="#e5505a" stroke-width="1.4" stroke-linecap="round" stroke-linejoin="round" stroke-width="1.3"/><rect x="580.6" y="406" width="15.6" height="15.2" rx="3.6" fill="none" stroke="#e5505a" stroke-width="1.4" stroke-linecap="round" stroke-linejoin="round" stroke-width="1.2"/><path d="M584,411 L585,412 L586.6,410 M588.6,411 H592.6 M584,416.4 L585,417.4 L586.6,415.4 M588.6,416.4 H592.6" fill="none" stroke="#e5505a" stroke-width="1.4" stroke-linecap="round" stroke-linejoin="round" stroke-width="1.1"/><ellipse cx="132.4" cy="483.6" rx="7" ry="2.4" fill="none" stroke="#e5505a" stroke-width="1.4" stroke-linecap="round" stroke-linejoin="round" stroke-width="1.2"/><path d="M125.4,483.6 V494.6 Q132.4,498.6 139.4,494.6 V483.6 M125.4,489.2 Q132.4,493 139.4,489.2" fill="none" stroke="#e5505a" stroke-width="1.4" stroke-linecap="round" stroke-linejoin="round" stroke-width="1.2"/><defs><linearGradient id="gr" gradientUnits="userSpaceOnUse" x1="1364" y1="600" x2="1384" y2="619"><stop offset="0" stop-color="#ff7477"/><stop offset="1" stop-color="#ee1c25"/></linearGradient></defs><circle cx="1373.8" cy="609.8" r="7.4" fill="url(#gr)"/><circle cx="1373.80" cy="602.50" r="2.9" fill="url(#gr)"/><circle cx="1380.12" cy="606.15" r="2.9" fill="url(#gr)"/><circle cx="1380.12" cy="613.45" r="2.9" fill="url(#gr)"/><circle cx="1373.80" cy="617.10" r="2.9" fill="url(#gr)"/><circle cx="1367.48" cy="613.45" r="2.9" fill="url(#gr)"/><circle cx="1367.48" cy="606.15" r="2.9" fill="url(#gr)"/><path d="M1371.6,606.6 Q1373.2,605.8 1374.4,607 L1381,613.8 Q1382.4,616.8 1380,618.4 Q1378.6,618.8 1377.6,617.8 L1371,610.6 Q1370,608.2 1371.6,606.6 Z" fill="#ffc9c9" opacity=".75"/><path d="M1595,602 H1602.6 L1603.8,603.4 H1610.8 Q1611.6,603.4 1611.6,604.4 V616.8 Q1611.6,617.7 1610.8,617.7 H1595.2 Q1594.2,617.7 1594.2,616.8 V603 Q1594.2,602 1595,602 Z" fill="#f0262c"/><path d="M1599.6,606.3 H1613.3 L1611.6,617.7 H1595.6 Z" fill="#ff8183"/></svg>
</body></html>
